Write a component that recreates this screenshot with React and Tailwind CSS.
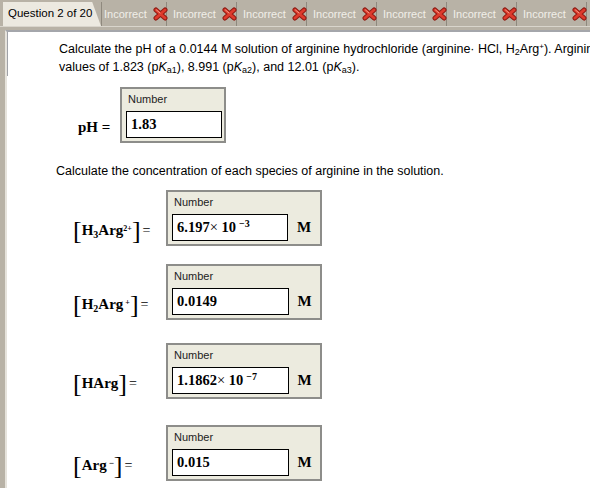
import React from "react";

const sans = { fontFamily: '"Liberation Sans", Arial, sans-serif' };
const serif = { fontFamily: '"Liberation Serif", "Times New Roman", serif' };

function RedX() {
  return (
    <svg width="15" height="14" viewBox="0 0 15 14" className="shrink-0">
      <g strokeLinecap="round">
        <path d="M3 3 L12 11 M12 3 L3 11" stroke="#8e1a12" strokeWidth="5" />
        <path d="M3 3 L12 11 M12 3 L3 11" stroke="#de3a2c" strokeWidth="3" />
        <path d="M3.5 3 L7 6" stroke="#f5a08a" strokeWidth="1" />
      </g>
    </svg>
  );
}

function IncorrectTab({ first }) {
  return (
    <div
      className={`flex h-full shrink-0 items-center border-r border-r-[#8f897e] ${
        first ? "w-[65px] pl-[2px]" : "w-[70px] pl-[6px]"
      }`}
    >
      <span className="text-[11px] text-[#f1efe9]" style={sans}>
        Incorrect
      </span>
      <span className="ml-[6px]">
        <RedX />
      </span>
    </div>
  );
}

function NumberBox({ width, inputWidth, value, unit }) {
  return (
    <div className="border-2 border-[#8d8d8a] bg-[#ecebdf] pl-[4px]" style={{ width }}>
      <div className="flex h-[22px] items-center pb-[1px] pl-[2px] text-[11px] text-[#222]" style={sans}>
        Number
      </div>
      <div className="flex items-center pb-[3px]">
        <div
          className="flex h-[27px] items-center border border-black bg-white pl-[4px] text-[14.5px] font-bold text-black"
          style={{ ...serif, width: inputWidth }}
        >
          {value}
        </div>
        {unit && (
          <div className="flex-1 text-center text-[15px] font-bold text-black" style={serif}>
            {unit}
          </div>
        )}
      </div>
    </div>
  );
}

function Bracketed({ children }) {
  return (
    <span className="inline-flex items-center text-black" style={serif}>
      <span className="text-[26px] font-normal leading-none">[</span>
      <span className="text-[15px] font-bold">{children}</span>
      <span className="text-[26px] font-normal leading-none">]</span>
      <span className="ml-[2px] text-[14px]">=</span>
    </span>
  );
}

function Sci({ base, exp }) {
  return (
    <span>
      {base}
      <span className="font-normal">×</span> 10
      <sup className="ml-[3px] text-[10px]">−{exp}</sup>
    </span>
  );
}

export default function App() {
  return (
    <div className="flex h-[488px] w-[590px] flex-col overflow-hidden bg-[#b8b2a6]" style={sans}>
      {/* question tab strip */}
      <div className="flex h-[27px] shrink-0 items-end border-b border-b-[#d9d5cc]">
        <div className="ml-[3px] flex h-[24px] w-[98px] shrink-0 items-center">
          <div
            className="flex h-full w-full items-center whitespace-nowrap bg-[#ece9e0] pl-[5px] text-[11.5px] text-black"
            style={{ clipPath: "polygon(0 0, 91% 0, 100% 100%, 0 100%)" }}
          >
            Question 2 of 20
          </div>
        </div>
        <div className="flex h-[24px] items-center border-l border-l-[#8f897e]">
          <IncorrectTab first />
          <IncorrectTab />
          <IncorrectTab />
          <IncorrectTab />
          <IncorrectTab />
          <IncorrectTab />
          <IncorrectTab />
        </div>
      </div>

      {/* question panel */}
      <div className="ml-[5px] mt-[3px] flex-1 border-l-2 border-t-2 border-l-[#e6e3dc] border-t-[#a4a6ab] bg-white">
        <div className="border-l border-l-[#9fa1a7] pl-[51px] pt-[8px] text-[12.5px] leading-[18px] text-black">
          <div className="whitespace-nowrap">
            Calculate the pH of a 0.0144 M solution of arginine hydrochloride (arginine· HCl, H
            <sub className="text-[9px]">2</sub>Arg<sup className="text-[8px]">+</sup>). Arginine has pK
            <sub className="text-[9px]">a</sub> values of
          </div>
          <div className="whitespace-nowrap">
            values of 1.823 (p<i>K</i>
            <sub className="text-[9px]">a1</sub>), 8.991 (p<i>K</i>
            <sub className="text-[9px]">a2</sub>), and 12.01 (p<i>K</i>
            <sub className="text-[9px]">a3</sub>).
          </div>
        </div>

        {/* pH answer */}
        <div className="mt-[11px] flex items-center pl-[71px]">
          <div className="w-[42px] pt-[24px] text-[15px] font-bold text-black" style={serif}>
            pH =
          </div>
          <NumberBox width="106px" inputWidth="96px" value="1.83" />
        </div>

        <div className="mt-[19px] pl-[49px] text-[12.5px] leading-[18px] text-black">
          Calculate the concentration of each species of arginine in the solution.
        </div>

        <div className="flex flex-col pl-[66px]">
          <div className="mt-[10px] flex items-center">
            <div className="w-[93px] pt-[27px]">
              <Bracketed>
                H<sub className="text-[10px]">3</sub>Arg<sup className="text-[8px]">2+</sup>
              </Bracketed>
            </div>
            <NumberBox
              width="156px"
              inputWidth="116px"
              value={<Sci base="6.197" exp="3" />}
              unit="M"
            />
          </div>

          <div className="mt-[18px] flex items-center">
            <div className="w-[93px] pt-[27px]">
              <Bracketed>
                H<sub className="text-[10px]">2</sub>Arg<sup className="ml-[2px] text-[8px]">+</sup>
              </Bracketed>
            </div>
            <NumberBox width="156px" inputWidth="117px" value="0.0149" unit="M" />
          </div>

          <div className="mt-[23px] flex items-center">
            <div className="w-[93px] pt-[27px]">
              <Bracketed>HArg</Bracketed>
            </div>
            <NumberBox
              width="156px"
              inputWidth="117px"
              value={<Sci base="1.1862" exp="7" />}
              unit="M"
            />
          </div>

          <div className="mt-[26px] flex items-center">
            <div className="w-[93px] pt-[27px]">
              <Bracketed>
                Arg<sup className="ml-[2px] text-[9px]">−</sup>
              </Bracketed>
            </div>
            <NumberBox width="156px" inputWidth="117px" value="0.015" unit="M" />
          </div>
        </div>
      </div>
    </div>
  );
}
